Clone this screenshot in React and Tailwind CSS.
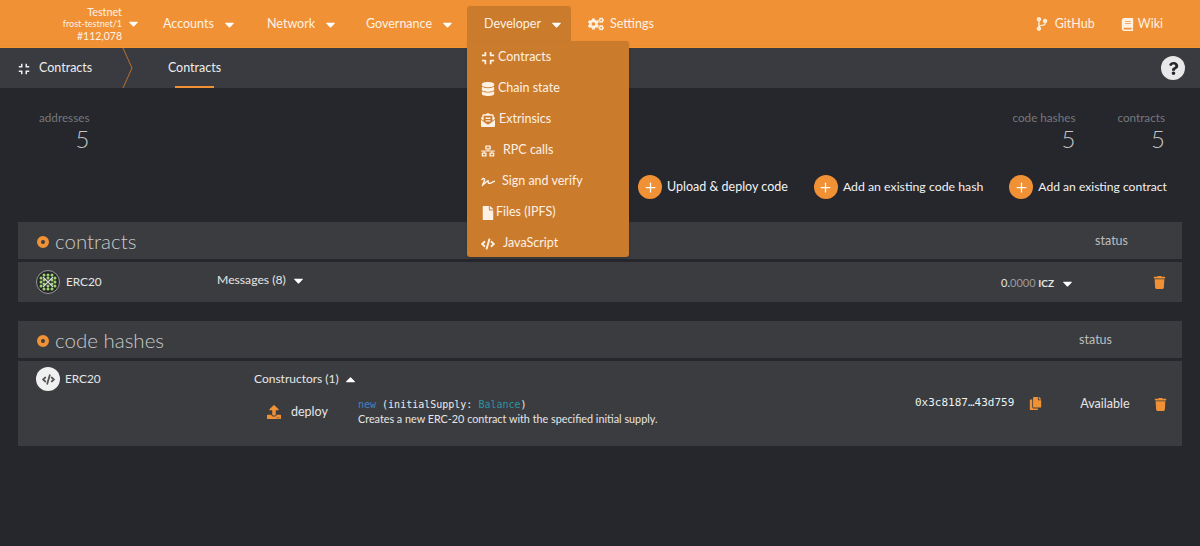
import React from "react";
import {
  FaBook, FaCaretDown, FaCaretUp, FaCode, FaCodeBranch, FaCogs, FaCompress, FaCopy, FaDatabase,
  FaEnvelopeOpenText, FaFile, FaNetworkWired, FaQuestion, FaSignature, FaTrash, FaUpload,
} from "react-icons/fa";
import { FiPlus } from "react-icons/fi";

const menu = [
  { label: "Contracts", icon: FaCompress, box: "w-[17px]" },
  { label: "Chain state", icon: FaDatabase, box: "w-[17px]" },
  { label: "Extrinsics", icon: FaEnvelopeOpenText, box: "w-[18px]" },
  { label: "RPC calls", icon: FaNetworkWired, box: "w-[22px]" },
  { label: "Sign and verify", icon: FaSignature, box: "w-[21px]" },
  { label: "Files (IPFS)", icon: FaFile, box: "w-[15px]" },
  { label: "JavaScript", icon: FaCode, box: "w-[22px]" },
];

function NavItem({ label, className }) {
  return (
    <div className={`flex items-center h-[41px] mt-[6px] pb-[5px] ${className}`}>
      <span>{label}</span>
      <FaCaretDown className="text-[15px] ml-[8px] text-white shrink-0" />
    </div>
  );
}

function Identicon() {
  const dots = [
    [8, 5], [12, 5], [16, 5], [5, 8], [12, 8], [19, 8], [8, 10], [16, 10], [5, 12], [19, 12],
    [8, 14], [16, 14], [5, 16], [12, 16], [19, 16], [8, 19], [12, 19], [16, 19],
  ];
  return (
    <svg width="24" height="24" viewBox="0 0 24 24" className="shrink-0">
      <circle cx="12" cy="12" r="11.5" fill="#24262a" stroke="#9a9a9a" strokeWidth="1" />
      {dots.map(([x, y]) => (
        <circle key={`${x}-${y}`} cx={x} cy={y} r="1.5" fill="#9ed36f" />
      ))}
      <path d="M7 7 L17 17 M17 7 L7 17" stroke="#d8d8d8" strokeWidth="1.2" />
    </svg>
  );
}

function Stat({ label, value, className }) {
  return (
    <div className={`text-right ${className}`}>
      <div className="text-[11.7px] leading-[16px] text-[#77787c]">{label}</div>
      <div className="text-[24px] leading-[28px] font-light text-[#c4c5c7]">{value}</div>
    </div>
  );
}

function AddButton({ label, className, textClass }) {
  return (
    <div className={`flex items-center gap-[5px] h-[24px] ${className}`}>
      <span className="w-[24px] h-[24px] rounded-full bg-[#f19135] flex items-center justify-center">
        <FiPlus className="text-[15px] text-white" />
      </span>
      <span className={`text-[#f2f2f2] ${textClass}`}>{label}</span>
    </div>
  );
}

function CardHeader({ title, statusClass }) {
  return (
    <div className="flex items-center h-[37px] bg-[#3b3c3f] pl-[19px]">
      <span className="w-[12px] h-[12px] mt-[2px] rounded-full border-[4px] border-[#f19135] bg-[#3b3c3f]" />
      <span className="ml-[6px] pt-[2px] text-[20.5px] font-light text-[#c9cacb]">{title}</span>
      <span className={`ml-auto pt-[2px] text-[#bdbebf] ${statusClass}`}>status</span>
    </div>
  );
}

export default function App() {
  return (
    <div className="w-[1200px] h-[546px] overflow-hidden bg-[#26272c] text-[12.5px] whitespace-nowrap [font-family:Lato,sans-serif]">
      <header className="relative flex h-[48px] bg-[#f19135] text-[#fdf1e4] border-b border-[#f5962f]">
        <div className="flex items-center w-[147px] pl-[38px]">
          <div className="w-[84px] text-right">
            <div className="text-[10.8px] leading-[12px] mt-[1px]">Testnet</div>
            <div className="text-[9px] leading-[12px]">frost-testnet/1</div>
            <div className="text-[10.5px] leading-[13px]">#112,078</div>
          </div>
          <FaCaretDown className="text-[15px] ml-[4px] text-white" />
        </div>
        <NavItem label="Accounts" className="pl-[16px] w-[120px]" />
        <NavItem label="Network" className="w-[99px]" />
        <NavItem label="Governance" className="w-[101px]" />
        <NavItem label="Developer" className="w-[104px] pl-[17px] bg-[#cb7b2c] rounded-t-[3px]" />
        <div className="flex items-center h-[41px] mt-[6px] pb-[5px] ml-[17px] gap-[6px]">
          <FaCogs className="text-[16px]" />
          <span>Settings</span>
        </div>
        <div className="ml-auto flex items-center h-[41px] mt-[6px] pb-[5px] pr-[37px]">
          <FaCodeBranch className="text-[14px]" />
          <span className="ml-[6px]">GitHub</span>
          <FaBook className="text-[13px] ml-[26px]" />
          <span className="ml-[4px]">Wiki</span>
        </div>
        <div className="absolute z-10 left-[467px] top-[41px] w-[162px] h-[216px] bg-[#cb7b2c] rounded-b-[3px] rounded-tr-[3px] pl-[14px] pt-[1px] shadow-sm">
          {menu.map((m) => (
            <div key={m.label} className="flex items-center h-[31px]">
              <span className={`${m.box} shrink-0`}>
                <m.icon className="text-[14px]" />
              </span>
              <span>{m.label}</span>
            </div>
          ))}
        </div>
      </header>

      <nav className="flex items-center h-[40px] bg-[#3a3b40] text-[#ecedee]">
        <div className="flex items-center w-[122px] pl-[18px] pt-[1px] gap-[9px]">
          <FaCompress className="text-[12px]" />
          <span>Contracts</span>
        </div>
        <svg width="11" height="40" viewBox="0 0 11 40" className="shrink-0">
          <path d="M1 0 L10 20 L1 40" fill="none" stroke="#b8742f" strokeWidth="1" />
        </svg>
        <div className="ml-[42px] h-[40px] w-[39px] pt-[3px] flex items-center justify-center border-b-2 border-[#f19135]">
          Contracts
        </div>
        <div className="ml-auto mr-[15px] w-[24px] h-[24px] rounded-full bg-[#e8e8e8] flex items-center justify-center">
          <FaQuestion className="text-[13px] text-[#26272c]" />
        </div>
      </nav>

      <section className="flex items-start h-[70px] pt-[21px] pr-[35px]">
        <Stat label="addresses" value="5" className="ml-[39px]" />
        <Stat label="code hashes" value="5" className="ml-auto" />
        <Stat label="contracts" value="5" className="ml-[42px]" />
      </section>

      <section className="flex h-[64px] pt-[17px] pl-[638px]">
        <AddButton label="Upload & deploy code" />
        <AddButton label="Add an existing code hash" className="ml-[26px]" textClass="text-[12.3px]" />
        <AddButton label="Add an existing contract" className="ml-[26px]" textClass="text-[12.1px]" />
      </section>

      <section className="mx-[18px]">
        <CardHeader title="contracts" statusClass="mr-[54px]" />
        <div className="flex items-center h-[40px] mt-[3px] bg-[#3b3c3f] pl-[18px] text-[#e6e6e7]">
          <Identicon />
          <span className="ml-[6px] w-[151px] text-[11.8px] pb-[1px]">ERC20</span>
          <span className="pb-[3px] text-[12.2px]">Messages (8)</span>
          <FaCaretDown className="text-[15px] ml-[5px] mb-[3px] text-white" />
          <span className="ml-auto pt-[3px] text-[11px]">0.<span className="text-[#9a9b9d]">0000</span> <span className="text-[10px] font-bold">ICZ</span></span>
          <FaCaretDown className="text-[15px] ml-[6px] mt-[3px] text-white" />
          <FaTrash className="text-[13px] text-[#f19135] ml-[78px] mr-[16px]" />
        </div>
      </section>

      <section className="mx-[18px] mt-[19px]">
        <CardHeader title="code hashes" statusClass="mr-[70px]" />
        <div className="flex h-[85px] mt-[3px] bg-[#3b3c3f] pl-[18px] text-[#e6e6e7]">
          <div className="flex items-center h-[36px] w-[218px]">
            <span className="w-[24px] h-[24px] rounded-full bg-[#f0f0f0] flex items-center justify-center shrink-0">
              <FaCode className="text-[13px] text-[#555]" />
            </span>
            <span className="ml-[5px] text-[11.8px]">ERC20</span>
          </div>
          <div className="w-[104px]">
            <div className="flex items-center h-[36px]">
              <span className="text-[12px]">Constructors (1)</span>
              <FaCaretUp className="text-[15px] ml-[4px] text-white shrink-0" />
            </div>
            <div className="flex items-center mt-[6px] pl-[13px]">
              <FaUpload className="text-[14px] text-[#f19135] shrink-0" />
              <span className="ml-[10px]">deploy</span>
            </div>
          </div>
          <div className="pt-[37px] w-[557px]">
            <div className="text-[10px] leading-[14px] [font-family:'DejaVu_Sans_Mono',monospace] text-[#ececec]">
              <span className="text-[#3b82c4]">new</span> (initialSupply: <span className="text-[#2a93a3]">Balance</span>)
            </div>
            <div className="text-[10.8px] leading-[13px]">Creates a new ERC-20 contract with the specified initial supply.</div>
          </div>
          <div className="flex items-center h-[85px]">
            <span className="text-[11px] [font-family:'DejaVu_Sans_Mono',monospace] text-[#e8f4f4]">0x3c8187…43d759</span>
            <FaCopy className="text-[13px] text-[#f19135] ml-[15px]" />
            <span className="ml-[38px] pt-[2px]">Available</span>
            <FaTrash className="text-[13px] text-[#f19135] ml-[24px] mt-[1px]" />
          </div>
        </div>
      </section>
    </div>
  );
}
